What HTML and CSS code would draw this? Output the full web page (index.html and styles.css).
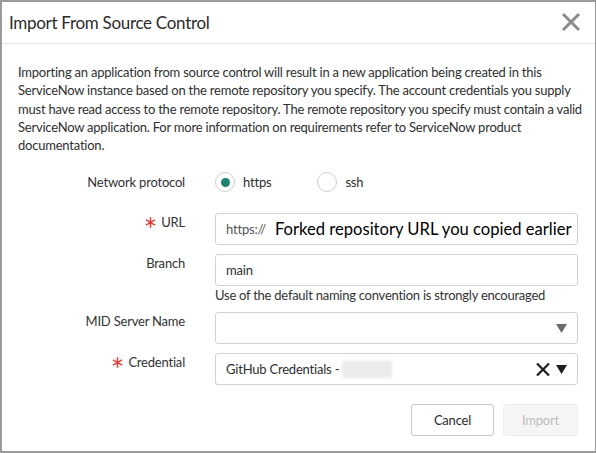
FILE: index.html
```html
<!DOCTYPE html>
<html>
<head>
<meta charset="utf-8">
<link rel="stylesheet" href="styles.css">
</head>
<body>
<div class="dialog">
  <div class="header">
    <h1 class="title">Import From Source Control</h1>
    <svg class="close" width="20" height="20" viewBox="0 0 20 20"><path d="M2 2 L18 18 M18 2 L2 18" stroke="#8c8c8c" stroke-width="3" fill="none"/></svg>
  </div>
  <div class="body">
    <p class="intro">Importing an application from source control will result in a new application being created in this<br>ServiceNow instance based on the remote repository you specify. The account credentials you supply<br>must have read access to the remote repository. The remote repository you specify must contain a valid<br>ServiceNow application. For more information on requirements refer to ServiceNow product<br>documentation.</p>

    <div class="row row-protocol">
      <div class="label">Network protocol</div>
      <div class="field radios">
        <label class="radio"><span class="dot on"></span><span>https</span></label>
        <label class="radio"><span class="dot"></span><span>ssh</span></label>
      </div>
    </div>

    <div class="row row-url">
      <div class="label"><svg class="req" width="11" height="11" viewBox="0 0 11 11"><path d="M5.5 0.3 V10.7 M1 2.9 L10 8.1 M10 2.9 L1 8.1" stroke="#e0403a" stroke-width="1.5" fill="none"/></svg>URL</div>
      <div class="field">
        <div class="input"><span class="prefix">https://</span><span class="big">Forked repository URL you copied earlier</span></div>
      </div>
    </div>

    <div class="row row-branch">
      <div class="label">Branch</div>
      <div class="field">
        <div class="input"><span class="val">main</span></div>
        <div class="help">Use of the default naming convention is strongly encouraged</div>
      </div>
    </div>

    <div class="row row-mid">
      <div class="label">MID Server Name</div>
      <div class="field">
        <div class="input select"><span class="val"></span>
          <svg class="caret" width="11" height="9" viewBox="0 0 11 9"><path d="M0 0 H11 L5.5 9 Z" fill="#6b6b6b"/></svg>
        </div>
      </div>
    </div>

    <div class="row row-cred">
      <div class="label"><svg class="req" width="11" height="11" viewBox="0 0 11 11"><path d="M5.5 0.3 V10.7 M1 2.9 L10 8.1 M10 2.9 L1 8.1" stroke="#e0403a" stroke-width="1.5" fill="none"/></svg>Credential</div>
      <div class="field">
        <div class="input select"><span class="val">GitHub Credentials -</span><span class="blur"></span>
          <svg class="clear" width="14" height="13" viewBox="0 0 14 13"><path d="M1 0.5 L13 12.5 M13 0.5 L1 12.5" stroke="#1e1e1e" stroke-width="2.2" fill="none"/></svg>
          <svg class="caret" width="11" height="9" viewBox="0 0 11 9"><path d="M0 0 H11 L5.5 9 Z" fill="#1e1e1e"/></svg>
        </div>
      </div>
    </div>

    <div class="buttons">
      <button class="btn cancel">Cancel</button>
      <button class="btn import">Import</button>
    </div>
  </div>
</div>
</body>
</html>
```

FILE: styles.css
```css
html, body {
  margin: 0;
  padding: 0;
  background: #ffffff;
}
body {
  font-family: Lato, "Liberation Sans", sans-serif;
  color: #2e2e2e;
  letter-spacing: -0.2px;
}
.dialog {
  box-sizing: border-box;
  width: 596px;
  height: 453px;
  border: 2px solid #9a9a9a;
  border-right-width: 1px;
  background: #fff;
}
.header {
  height: 41px;
  border-bottom: 1px solid #e3e3e3;
  display: flex;
  align-items: center;
  justify-content: space-between;
  padding: 0 14px 0 7px;
}
.title {
  margin: 0;
  font-size: 17px;
  font-weight: 400;
  color: #2b2b2b;
  letter-spacing: -0.3px;
}
.close {
  display: block;
  margin-top: -2px;
}
.body {
  padding: 19px 17px 0 16px;
}
.intro {
  margin: 0;
  font-size: 13px;
  line-height: 18.3px;
  white-space: nowrap;
  color: #2f2f2f;
  letter-spacing: -0.22px;
}
.row {
  display: flex;
  column-gap: 30px;
}
.label {
  width: 167px;
  flex: none;
  text-align: right;
  font-size: 13px;
  line-height: 18px;
  color: #333;
}
.req {
  display: inline-block;
  vertical-align: -1px;
  margin-right: 5px;
}
.field {
  flex: 1;
  min-width: 0;
}
.row-protocol {
  margin-top: 17px;
  height: 22px;
  align-items: center;
}
.radios {
  display: flex;
  align-items: center;
  gap: 46px;
}
.radio {
  display: flex;
  align-items: center;
  gap: 8px;
  font-size: 13px;
  color: #2e2e2e;
}
.dot {
  box-sizing: border-box;
  width: 20px;
  height: 20px;
  border: 1px solid #cfcfcf;
  border-radius: 50%;
  display: flex;
  align-items: center;
  justify-content: center;
}
.dot.on::after {
  content: "";
  width: 9px;
  height: 9px;
  border-radius: 50%;
  background: #1e8272;
}
.input {
  box-sizing: border-box;
  height: 32px;
  border: 1px solid #d2d2d2;
  border-radius: 3px;
  display: flex;
  align-items: center;
  padding: 0 10px;
  font-size: 13px;
  color: #2e2e2e;
}
.prefix {
  color: #555;
  font-size: 13px;
  margin-right: 9px;
}
.big {
  font-size: 16.6px;
  color: #000;
  white-space: nowrap;
  letter-spacing: 0;
}
.row-url {
  margin-top: 20px;
}
.row-branch {
  margin-top: 9px;
}
.help {
  font-size: 13px;
  line-height: 18px;
  color: #333;
  white-space: nowrap;
  letter-spacing: -0.25px;
}
.row-mid {
  margin-top: 8px;
}
.row-cred {
  margin-top: 9px;
}
.select .val {
  flex: none;
}
.select .caret {
  margin-left: auto;
  display: block;
}
.blur {
  width: 50px;
  height: 17px;
  margin-left: 3px;
  background: #ebebeb;
  filter: blur(1.5px);
}
.clear {
  margin-left: auto;
  margin-right: 6px;
  display: block;
}
.select .clear + .caret {
  margin-left: 0;
}
.buttons {
  display: flex;
  justify-content: flex-end;
  gap: 9px;
  margin-top: 19px;
}
.btn {
  box-sizing: border-box;
  height: 32px;
  border-radius: 3px;
  font-family: Lato, "Liberation Sans", sans-serif;
  font-size: 13px;
  letter-spacing: -0.2px;
  padding: 0;
}
.cancel {
  width: 83px;
  background: #fff;
  border: 1px solid #c9c9c9;
  color: #2b2b2b;
}
.import {
  width: 75px;
  background: #f5f5f5;
  border: 1px solid #efefef;
  color: #bdbdbd;
}
```
